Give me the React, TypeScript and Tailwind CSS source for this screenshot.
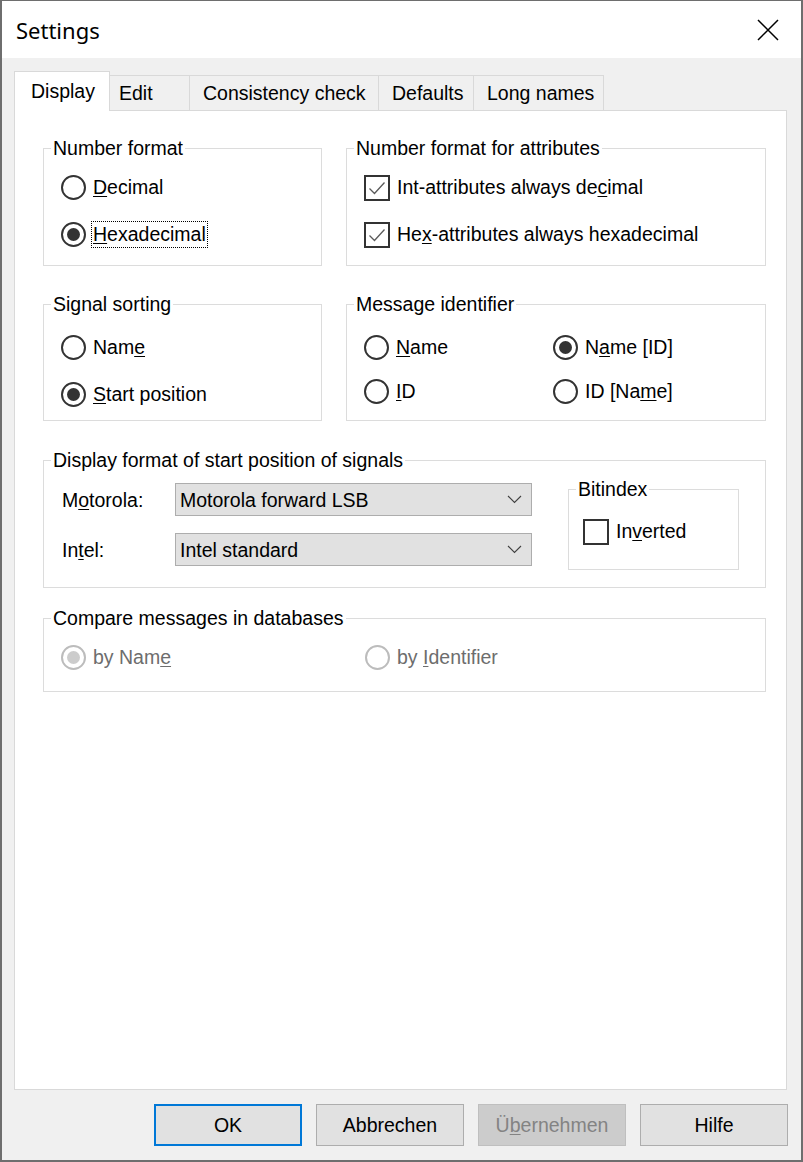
import React from "react";

const FONT = { fontFamily: '"Liberation Sans", Arial, sans-serif' };

function U({ children }: { children: React.ReactNode }) {
  return <span className="underline underline-offset-[2px] decoration-1">{children}</span>;
}

function Radio({
  checked,
  disabled,
  focus,
  children,
}: {
  checked?: boolean;
  disabled?: boolean;
  focus?: boolean;
  children: React.ReactNode;
}) {
  const ring = disabled ? "border-[#bcbcbc]" : "border-[#333333]";
  const dot = disabled ? "bg-[#cccccc]" : "bg-[#333333]";
  return (
    <div className="flex items-center">
      <span
        className={`flex h-[25px] w-[25px] shrink-0 items-center justify-center rounded-full border-2 bg-white ${ring}`}
      >
        {checked && <span className={`h-[13px] w-[13px] rounded-full ${dot}`} />}
      </span>
      <span
        className={`ml-[5px] border px-[1px] py-[1px] leading-[23px] ${
          focus ? "border-dotted border-black" : "border-transparent"
        } ${disabled ? "text-[#6d6d6d]" : "text-black"}`}
      >
        {children}
      </span>
    </div>
  );
}

function Check({ checked, children }: { checked?: boolean; children: React.ReactNode }) {
  return (
    <div className="flex items-center">
      <span className="flex h-[26px] w-[26px] shrink-0 items-center justify-center border-2 border-[#333333] bg-white">
        {checked && (
          <svg width="20" height="20" viewBox="0 0 20 20">
            <path d="M2.5 10.5 L7.5 15.5 L17.5 4.5" fill="none" stroke="#5a5a5a" strokeWidth="1.3" />
          </svg>
        )}
      </span>
      <span className="ml-[5px] border border-transparent px-[1px] py-[1px] leading-[23px]">{children}</span>
    </div>
  );
}

function Group({
  title,
  className,
  children,
}: {
  title: string;
  className: string;
  children: React.ReactNode;
}) {
  return (
    <fieldset className={`border border-[#dcdcdc] ${className}`}>
      <legend className="ml-[7px] px-[2px] leading-[22px] text-black">{title}</legend>
      {children}
    </fieldset>
  );
}

function Combo({ value }: { value: string }) {
  return (
    <div className="flex h-[33px] w-[357px] items-center justify-between border border-[#adadad] bg-[#e1e1e1] pl-[4px] pr-[9px]">
      <span className="leading-[22px]">{value}</span>
      <svg width="15" height="9" viewBox="0 0 15 9">
        <path d="M1 1 L7.5 7.5 L14 1" fill="none" stroke="#404040" strokeWidth="1.1" />
      </svg>
    </div>
  );
}

function Button({
  children,
  primary,
  disabled,
}: {
  children: React.ReactNode;
  primary?: boolean;
  disabled?: boolean;
}) {
  const look = primary
    ? "border-2 border-[#0078d7] bg-[#e1e1e1] text-black"
    : disabled
      ? "border border-[#bfbfbf] bg-[#cccccc] text-[#838383]"
      : "border border-[#adadad] bg-[#e1e1e1] text-black";
  return (
    <div className={`flex h-[42px] w-[148px] items-center justify-center ${look}`}>
      <span className="leading-[22px]">{children}</span>
    </div>
  );
}

const tabs = [
  { label: "Edit", w: "w-[80px]", pl: "pl-[9px]" },
  { label: "Consistency check", w: "w-[189px]", pl: "pl-[13px]" },
  { label: "Defaults", w: "w-[95px]", pl: "pl-[13px]" },
  { label: "Long names", w: "w-[130px]", pl: "pl-[13px]" },
];

export default function App() {
  return (
    <div
      className="flex h-[1162px] w-[803px] flex-col border-x-2 border-t border-b-2 border-[#6e6e6e] bg-[#f0f0f0] text-[19.5px] text-black"
      style={FONT}
    >
      {/* title bar */}
      <div className="flex h-[57px] shrink-0 items-center justify-between bg-white pl-[14px] pr-[22px]">
        <span className="text-[22px] leading-[28px]" style={{ fontFamily: '"Noto Sans", "Open Sans", sans-serif' }}>
          Settings
        </span>
        <svg width="22" height="22" viewBox="0 0 22 22">
          <path d="M1 1 L21 21 M21 1 L1 21" stroke="#000" strokeWidth="1.5" />
        </svg>
      </div>

      <div className="flex flex-1 flex-col pl-[12px] pr-[13px] pt-[13px]">
        {/* tabs */}
        <div className="flex h-[39px] items-end">
          <div className="relative z-10 -mb-[1px] flex h-[40px] w-[96px] items-center border-x border-t border-[#d9d9d9] bg-white pb-[2px] pl-[16px]">
            <span className="leading-[22px]">Display</span>
          </div>
          {tabs.map((t) => (
            <div
              key={t.label}
              className={`flex h-[35px] items-center border-r border-t border-[#d9d9d9] bg-[#f0f0f0] ${t.w} ${t.pl}`}
            >
              <span className="leading-[22px]">{t.label}</span>
            </div>
          ))}
        </div>

        {/* panel */}
        <div className="flex h-[980px] w-[773px] flex-col border border-[#d9d9d9] bg-white pl-[28px] pr-[20px] pt-[26px]">
          <div className="flex gap-[24px]">
            <Group title="Number format" className="h-[129px] w-[279px]">
              <div className="flex flex-col gap-[20px] pl-[17px] pt-[15px]">
                <Radio>
                  <U>D</U>ecimal
                </Radio>
                <Radio checked focus>
                  <U>H</U>exadecimal
                </Radio>
              </div>
            </Group>
            <Group title="Number format for attributes" className="h-[129px] w-[420px]">
              <div className="flex flex-col gap-[20px] pl-[17px] pt-[15px]">
                <Check checked>
                  Int-attributes always de<U>c</U>imal
                </Check>
                <Check checked>
                  He<U>x</U>-attributes always hexadecimal
                </Check>
              </div>
            </Group>
          </div>

          <div className="mt-[27px] flex gap-[24px]">
            <Group title="Signal sorting" className="h-[128px] w-[279px]">
              <div className="flex flex-col gap-[20px] pl-[17px] pt-[19px]">
                <Radio>
                  Nam<U>e</U>
                </Radio>
                <Radio checked>
                  <U>S</U>tart position
                </Radio>
              </div>
            </Group>
            <Group title="Message identifier" className="h-[128px] w-[420px]">
              <div className="grid grid-cols-[189px_1fr] gap-y-[17px] pl-[17px] pt-[19px]">
                <Radio>
                  <U>N</U>ame
                </Radio>
                <Radio checked>
                  N<U>a</U>me [ID]
                </Radio>
                <Radio>
                  <U>I</U>D
                </Radio>
                <Radio>
                  ID [Na<U>m</U>e]
                </Radio>
              </div>
            </Group>
          </div>

          <Group title="Display format of start position of signals" className="mt-[28px] h-[139px] w-[723px]">
            <div className="flex items-start pl-[18px]">
              <div className="flex flex-col gap-[17px] pt-[12px]">
                <div className="flex items-center">
                  <span className="w-[113px] leading-[22px]">
                    M<U>o</U>torola:
                  </span>
                  <Combo value="Motorola forward LSB" />
                </div>
                <div className="flex items-center">
                  <span className="w-[113px] leading-[22px]">
                    In<U>t</U>el:
                  </span>
                  <Combo value="Intel standard" />
                </div>
              </div>
              <Group title="Bitindex" className="ml-[36px] mt-[7px] h-[92px] w-[171px]">
                <div className="pl-[14px] pt-[18px]">
                  <Check>
                    In<U>v</U>erted
                  </Check>
                </div>
              </Group>
            </div>
          </Group>

          <Group title="Compare messages in databases" className="mt-[19px] h-[85px] w-[723px]">
            <div className="grid grid-cols-[304px_1fr] pl-[17px] pt-[15px]">
              <Radio checked disabled>
                by Nam<U>e</U>
              </Radio>
              <Radio disabled>
                by <U>I</U>dentifier
              </Radio>
            </div>
          </Group>
        </div>

        {/* buttons */}
        <div className="mt-[14px] flex justify-end gap-[14px]">
          <Button primary>OK</Button>
          <Button>Abbrechen</Button>
          <Button disabled>
            Ü<U>b</U>ernehmen
          </Button>
          <Button>Hilfe</Button>
        </div>
      </div>
    </div>
  );
}
